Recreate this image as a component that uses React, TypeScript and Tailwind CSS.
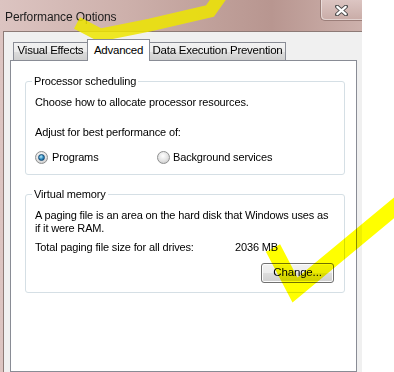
import React from "react";

function Radio({ checked }: { checked?: boolean }) {
  return (
    <span className="flex h-[13px] w-[13px] shrink-0 items-center justify-center rounded-full border border-[#8e8f8f] bg-[radial-gradient(circle_at_45%_35%,#ffffff,#e2e2e2_55%,#bdbdbd)]">
      {checked && (
        <span className="h-[7px] w-[7px] rounded-full border border-[#174a73] bg-[radial-gradient(circle_at_40%_35%,#b8ecfb,#2a86bd_55%,#0f4f80)]" />
      )}
    </span>
  );
}

export default function App() {
  return (
    <div className="relative h-[372px] w-[394px] overflow-hidden bg-white font-['Liberation_Sans',Arial,sans-serif] text-[11px] tracking-[-0.15px] text-black">
      <div className="flex h-full w-[362px] flex-col bg-[linear-gradient(90deg,#dcc4c1,#cdb0ab_35%,#bf9f99_60%,#b89690_75%,#cdb1ac)]">
        {/* title bar */}
        <div className="relative flex h-[31px] shrink-0 items-center pl-[5px] pt-[3px] text-[12px] tracking-[-0.1px] text-[#1c1c1c]">
          <span>Performance Options</span>
          <div className="absolute right-0 top-0 flex h-[21px] w-[42px] items-center justify-center rounded-bl-[5px] border-b border-l border-[#9b7e79] bg-[linear-gradient(180deg,#dcc5c2,#c9aca7)] shadow-[inset_1px_-1px_0_rgba(255,255,255,0.45)]">
            <svg width="13" height="11" viewBox="0 0 13 11">
              <path d="M2 1.5 L11 9.5 M11 1.5 L2 9.5" stroke="#4a4a4a" strokeWidth="4" strokeLinecap="round" />
              <path d="M2.3 1.8 L10.7 9.2 M10.7 1.8 L2.3 9.2" stroke="#ffffff" strokeWidth="2.2" strokeLinecap="round" />
            </svg>
          </div>
        </div>

        {/* body */}
        <div className="ml-[3px] flex flex-1 flex-col border-l border-t border-[#8d7a76] bg-[#f0f0f0] pl-[6px] pr-[5px] pt-[7px]">
          {/* tabs */}
          <div className="flex h-[21px] items-end pl-[3px]">
            <div className="flex h-[18px] w-[74px] items-center justify-center border-l border-t border-[#898c95] bg-[linear-gradient(180deg,#f2f2f2,#ebebeb_50%,#dddddd_51%,#cfcfcf)] pb-[1px] text-[11.5px] tracking-[-0.25px]">
              Visual Effects
            </div>
            <div className="relative z-10 -mb-[1px] flex h-[22px] w-[63px] items-start justify-center border-l border-r border-t border-[#898c95] bg-white pt-[2px] text-[11.5px] tracking-[-0.25px]">
              Advanced
            </div>
            <div className="flex h-[18px] w-[136px] items-center justify-center border-r border-t border-[#898c95] bg-[linear-gradient(180deg,#f2f2f2,#ebebeb_50%,#dddddd_51%,#cfcfcf)] pb-[1px] text-[11.5px] tracking-[-0.25px]">
              Data Execution Prevention
            </div>
          </div>

          {/* panel */}
          <div className="flex-1 border border-[#898c95] bg-white pl-[14px] pr-[11px] pt-[13px]">
            <fieldset className="rounded-[3px] border border-[#d5dfe5] pb-[10px]">
              <legend className="ml-[6px] px-[2px] leading-[14px]">Processor scheduling</legend>
              <div className="pl-[9px]">
                <div className="mt-[7px] leading-[14px]">Choose how to allocate processor resources.</div>
                <div className="mt-[16px] leading-[14px]">Adjust for best performance of:</div>
                <div className="mt-[11px] flex h-[14px] items-center leading-[14px]">
                  <div className="flex w-[122px] items-center gap-[4px]">
                    <Radio checked />
                    <span>Programs</span>
                  </div>
                  <div className="flex items-center gap-[3px]">
                    <Radio />
                    <span>Background services</span>
                  </div>
                </div>
              </div>
            </fieldset>

            <fieldset className="mt-[12px] rounded-[3px] border border-[#d5dfe5] pb-[9px]">
              <legend className="ml-[6px] px-[2px] leading-[14px]">Virtual memory</legend>
              <div className="pl-[9px] pr-[10px]">
                <div className="mt-[8px] leading-[13px]">
                  A paging file is an area on the hard disk that Windows uses as
                  <br />
                  if it were RAM.
                </div>
                <div className="mt-[5px] flex leading-[14px]">
                  <span className="w-[200px]">Total paging file size for all drives:</span>
                  <span>2036 MB</span>
                </div>
                <div className="mt-[9px] flex justify-end">
                  <button className="flex h-[20px] w-[73px] items-center justify-center rounded-[3px] border border-[#707070] bg-[linear-gradient(180deg,#f2f2f2,#ebebeb_50%,#dddddd_51%,#cfcfcf)] text-[11.5px] text-black shadow-[inset_0_0_0_1px_#fcfcfc]">
                    Change...
                  </button>
                </div>
              </div>
            </fieldset>
          </div>
        </div>
      </div>

      {/* highlighter marks */}
      <svg className="pointer-events-none absolute inset-0 opacity-[0.85]" width="394" height="372" viewBox="0 0 394 372">
        <path d="M77 23 L100 35 L150 25 L210 11 L222 -6" fill="none" stroke="#eee600" strokeWidth="13" strokeLinejoin="miter" strokeLinecap="butt" />
      </svg>
      <svg className="pointer-events-none absolute inset-0 mix-blend-multiply" width="394" height="372" viewBox="0 0 394 372">
        <path d="M273 248 L295 290 L400 203" fill="none" stroke="#ffff00" strokeWidth="16" strokeLinejoin="miter" strokeMiterlimit="10" strokeLinecap="butt" />
      </svg>
    </div>
  );
}
